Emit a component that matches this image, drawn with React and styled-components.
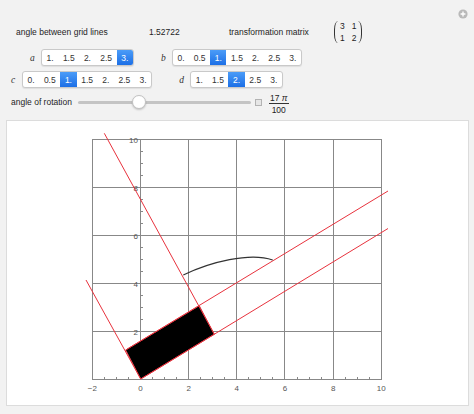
import React from 'react';
import styled, { createGlobalStyle } from 'styled-components';

const GlobalStyle = createGlobalStyle`
  body {
    margin: 0;
    background: #f2f2f2;
    font-family: "Liberation Sans", Arial, sans-serif;
  }
`;

const rows = [
  [
    { name: 'a', values: ['1.', '1.5', '2.', '2.5', '3.'], selected: 4 },
    { name: 'b', values: ['0.', '0.5', '1.', '1.5', '2.', '2.5', '3.'], selected: 2 },
  ],
  [
    { name: 'c', values: ['0.', '0.5', '1.', '1.5', '2.', '2.5', '3.'], selected: 2 },
    { name: 'd', values: ['1.', '1.5', '2.', '2.5', '3.'], selected: 2 },
  ],
];

// plot coordinates -> page pixels
const X = (x) => 140.5 + 24.08 * x;
const Y = (y) => 379.5 - 24 * y;
const snap = (v) => Math.floor(v) + 0.5;

const redLines = [
  [140.7, 379, 388, 228.5],
  [125.7, 350, 388, 191],
  [214.3, 334.3, 104.3, 133.3],
  [140.7, 379, 86, 280],
];

function Plot() {
  const grid = [2, 4, 6, 8];
  const ticks = [];
  for (let i = 1; i < 20; i++) {
    const v = i / 2;
    const major = i % 4 === 0;
    ticks.push(
      <line key={'y' + i} x1={140.5} x2={140.5 + (major ? 4 : 2.5)} y1={snap(Y(v))} y2={snap(Y(v))} />
    );
  }
  for (let i = -3; i < 20; i++) {
    const v = i / 2;
    if (i === 0) continue;
    const major = i % 4 === 0;
    ticks.push(
      <line key={'x' + i} x1={snap(X(v))} x2={snap(X(v))} y1={379.5} y2={379.5 - (major ? 4 : 2.5)} />
    );
  }
  return (
    <svg width="461" height="284" style={{ overflow: 'visible', display: 'block' }}>
      <g transform="translate(-7,-121)">
        <g stroke="#888" strokeWidth="1" fill="none">
          <rect x={92.5} y={139.5} width={289} height={240} />
          {grid.map((g) => (
            <line key={'gv' + g} x1={snap(X(g))} x2={snap(X(g))} y1={139.5} y2={379.5} />
          ))}
          {grid.map((g) => (
            <line key={'gh' + g} x1={92.5} x2={381.5} y1={snap(Y(g))} y2={snap(Y(g))} />
          ))}
          <line x1={140.5} x2={140.5} y1={139.5} y2={379.5} />
          {ticks}
        </g>
        <g fill="#555" fontSize="8" fontFamily="Liberation Sans, Arial, sans-serif">
          {[2, 4, 6, 8, 10].map((v) => (
            <text key={'ly' + v} x={138} y={Y(v) + 3} textAnchor="end">{v}</text>
          ))}
          {[-2, 0, 2, 4, 6, 8, 10].map((v) => (
            <text key={'lx' + v} x={X(v)} y={391} textAnchor="middle">{v < 0 ? '−' + -v : v}</text>
          ))}
        </g>
        <polygon
          points="140.7,379 214.3,334.3 199.3,305.7 125.7,350"
          fill="#000"
          stroke="#e8323d"
          strokeWidth="0.8"
        />
        <g stroke="#e8323d" strokeWidth="1">
          {redLines.map((l, i) => (
            <line key={'r' + i} x1={l[0]} y1={l[1]} x2={l[2]} y2={l[3]} />
          ))}
        </g>
        <path d="M183.3,275 C210,262 250,252 272.7,260" fill="none" stroke="#333" strokeWidth="1.2" />
      </g>
    </svg>
  );
}

export default function App() {
  return (
    <>
      <GlobalStyle />
      <Page>
        <Controls>
          <PlusIcon viewBox="0 0 10 10">
            <circle cx="5" cy="5" r="4.6" fill="#b9b9b9" />
            <path d="M5 2.6v4.8M2.6 5h4.8" stroke="#fff" strokeWidth="1.3" />
          </PlusIcon>
          <InfoRow>
            <Text>angle between grid lines</Text>
            <Text>1.52722</Text>
            <Text>transformation matrix</Text>
            <Matrix>
              <Paren />
              <Cells>
                <span>3</span><span>1</span>
                <span>1</span><span>2</span>
              </Cells>
              <Paren $right />
            </Matrix>
          </InfoRow>
          {rows.map((row, r) => (
            <SetterRow key={r} $indent={r === 0 ? 30 : 11} $top={r === 0 ? 4 : 5}>
              {row.map((ctl) => (
                <Control key={ctl.name}>
                  <VarLabel>{ctl.name}</VarLabel>
                  <SetterBar>
                    {ctl.values.map((v, i) => (
                      <Setter key={v} $active={i === ctl.selected}>{v}</Setter>
                    ))}
                  </SetterBar>
                </Control>
              ))}
            </SetterRow>
          ))}
          <SliderRow>
            <Text>angle of rotation</Text>
            <Track>
              <Thumb style={{ left: `${(61 / 173) * 100}%` }} />
            </Track>
            <ToggleBox />
            <Fraction>
              <span>17 <i>π</i></span>
              <Denom>100</Denom>
            </Fraction>
          </SliderRow>
        </Controls>
        <PlotPanel>
          <Plot />
        </PlotPanel>
      </Page>
    </>
  );
}

const Page = styled.div`
  width: 474px;
  height: 414px;
  background: #f2f2f2;
  overflow: hidden;
`;

const Controls = styled.div`
  position: relative;
  height: 120px;
  box-sizing: border-box;
  padding-top: 19px;
  color: #1e1e1e;
  font-size: 8.5px;
`;

const PlusIcon = styled.svg`
  position: absolute;
  left: 458px;
  top: 9px;
  width: 10px;
  height: 10px;
`;

const Text = styled.span`
  font-size: 8.5px;
  white-space: nowrap;
  color: #1e1e1e;
`;

const InfoRow = styled.div`
  display: grid;
  grid-template-columns: 133px 80px 105px auto;
  align-items: center;
  height: 26px;
  padding-left: 16px;
`;

const Matrix = styled.div`
  display: flex;
  align-items: center;
  gap: 2px;
`;

const Paren = styled.span`
  width: 3px;
  height: 22px;
  border: 0 solid #333;
  border-left-width: ${(p) => (p.$right ? 0 : 1)}px;
  border-right-width: ${(p) => (p.$right ? 1 : 0)}px;
  border-radius: ${(p) => (p.$right ? '0 5px 5px 0 / 0 11px 11px 0' : '5px 0 0 5px / 11px 0 0 11px')};
`;

const Cells = styled.div`
  display: grid;
  grid-template-columns: auto auto;
  column-gap: 7px;
  line-height: 12px;
  font-size: 8.5px;
`;

const SetterRow = styled.div`
  display: flex;
  align-items: center;
  height: 17px;
  margin-top: ${(p) => p.$top}px;
  padding-left: ${(p) => p.$indent}px;
  gap: 27px;
`;

const Control = styled.div`
  display: flex;
  align-items: center;
`;

const VarLabel = styled.span`
  width: 11px;
  font-family: "Liberation Serif", "Times New Roman", serif;
  font-style: italic;
  font-size: 9.5px;
  color: #333;
`;

const SetterBar = styled.div`
  display: flex;
  height: 17px;
  background: #fff;
  border: 1px solid #c9c9c9;
  border-radius: 3px;
  box-shadow: 0 1px 1px rgba(0, 0, 0, 0.08);
  box-sizing: border-box;
  overflow: hidden;
`;

const Setter = styled.span`
  display: flex;
  align-items: center;
  padding: 0 4.6px;
  font-size: 8.5px;
  color: ${(p) => (p.$active ? '#fff' : '#333')};
  background: ${(p) => (p.$active ? 'linear-gradient(#4b9cf8, #1c6fe6)' : 'transparent')};
`;

const SliderRow = styled.div`
  display: flex;
  align-items: center;
  height: 20px;
  margin-top: 4px;
  padding-left: 11px;
`;

const Track = styled.div`
  position: relative;
  width: 173px;
  height: 3px;
  margin-left: 6px;
  border-radius: 2px;
  background: #c4c4c4;
`;

const Thumb = styled.span`
  position: absolute;
  top: 50%;
  width: 14px;
  height: 14px;
  margin: -7px 0 0 -7px;
  border-radius: 50%;
  background: #fff;
  border: 1px solid #c2c2c2;
  box-sizing: border-box;
  box-shadow: 0 1px 2px rgba(0, 0, 0, 0.2);
`;

const ToggleBox = styled.span`
  width: 5px;
  height: 5px;
  margin-left: 4px;
  border: 1px solid #b3b3b3;
  background: #e6e6e6;
`;

const Fraction = styled.div`
  display: flex;
  flex-direction: column;
  align-items: center;
  margin-left: 7px;
  margin-top: 4px;
  font-size: 8.5px;
  line-height: 10px;
  color: #222;
  & > span:first-child {
    border-bottom: 1px solid #333;
    padding: 0 1px;
    line-height: 9px;
  }
`;

const Denom = styled.span`
  padding-top: 1px;
`;

const PlotPanel = styled.div`
  margin-left: 6px;
  width: 463px;
  height: 286px;
  box-sizing: border-box;
  background: #fff;
  border: 1px solid #dcdcdc;
`;
